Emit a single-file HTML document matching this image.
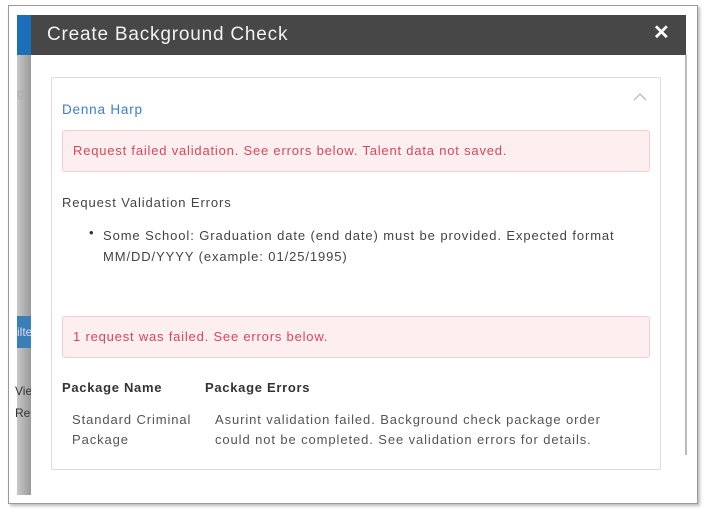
<!DOCTYPE html><html><head><style>
body{margin:0;width:705px;height:512px;background:#fff;position:relative;overflow:hidden;font-family:"Liberation Sans",sans-serif}
.frame{position:absolute;left:8px;top:5px;width:688px;height:497px;border:1px solid #9a9a9a;box-shadow:2px 2px 3px #bbb;background:#fff}
.a{position:absolute}
.alert{position:absolute;left:62px;width:586px;height:40px;background:#fdeef0;border:1px solid #f7cdd4;border-radius:3px;color:#d8475a;font-size:13px;letter-spacing:0.8px;line-height:40px;text-indent:10px}
.t{position:absolute;font-size:13px;letter-spacing:0.9px;color:#555}
</style></head><body>
<div class="frame"></div>
<div class="a" style="left:17px;top:15px;width:14px;height:480px;background:linear-gradient(90deg,#c8c8c8,#9a9a9a)"></div>
<div class="a" style="left:17px;top:15px;width:14px;height:40px;background:#1b6fb8"></div>
<div class="a" style="left:17px;top:316px;width:14px;height:32px;background:#3a7fb8;color:#dde;font-size:12px;line-height:32px;overflow:hidden">ilte</div>
<div class="a" style="left:17px;top:86px;color:#aaa;font-size:12px">g</div>
<div class="a" style="left:15px;top:380px;color:#333;font-size:12px;width:16px;overflow:hidden;line-height:22px">Vie<br>Re</div>
<div class="a" style="left:31px;top:15px;width:655px;height:40px;background:#474747"></div>
<div class="a" style="left:47px;top:24px;color:#f2f2f2;font-size:19px;letter-spacing:0.8px">Create Background Check</div>
<div class="a" style="left:653px;top:20px;color:#fff;font-size:20px;font-weight:bold">✕</div>
<div class="a" style="left:31px;top:55px;width:655px;height:440px;background:#fff"></div>
<div class="a" style="left:685px;top:55px;width:2px;height:400px;background:#bbb"></div>
<div class="a" style="left:51px;top:77px;width:608px;height:391px;border:1px solid #ddd;border-radius:2px"></div>
<svg class="a" style="left:633px;top:93px" width="14" height="9"><path d="M1 7 L7 1 L13 7" stroke="#bbb" fill="none" stroke-width="1.3"/></svg>
<div class="a" style="left:62px;top:102px;color:#3b7fd0;font-size:13.5px;letter-spacing:0.8px">Denna Harp</div>
<div class="alert" style="top:130px">Request failed validation. See errors below. Talent data not saved.</div>
<div class="t" style="left:62px;top:195px;color:#444">Request Validation Errors</div>
<div class="t" style="left:89px;top:225px;color:#333">•</div>
<div class="t" style="left:103px;top:225px;line-height:21px;color:#444">Some School: Graduation date (end date) must be provided. Expected format<br>MM/DD/YYYY (example: 01/25/1995)</div>
<div class="alert" style="top:316px">1 request was failed. See errors below.</div>
<div class="t" style="left:62px;top:380px;color:#333;font-weight:bold;letter-spacing:0.7px">Package Name</div>
<div class="t" style="left:205px;top:380px;color:#333;font-weight:bold;letter-spacing:0.7px">Package Errors</div>
<div class="t" style="left:72px;top:410px;line-height:20px">Standard Criminal<br>Package</div>
<div class="t" style="left:215px;top:410px;line-height:20px">Asurint validation failed. Background check package order<br>could not be completed. See validation errors for details.</div>
</body></html>
